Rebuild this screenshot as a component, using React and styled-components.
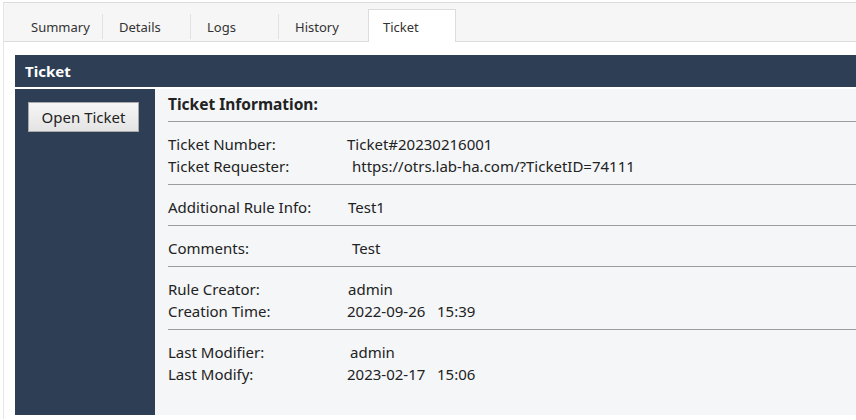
import React from "react";
import styled, { createGlobalStyle } from "styled-components";

const Global = createGlobalStyle`
  html, body { margin: 0; padding: 0; background: #ffffff; }
  body { font-family: "Noto Sans", "Open Sans", sans-serif; color: #222; }
`;

const Frame = styled.div`
  margin: 2px 0 0 3px;
  border-top: 1px solid #dcdcdc;
  border-left: 1px solid #e6e6e6;
  height: 417px;
  box-sizing: border-box;
`;

const TabBar = styled.div`
  display: flex;
  align-items: flex-end;
  height: 38px;
  padding-left: 12px;
  background: #f6f6f6;
  border-bottom: 1px solid #dcdcdc;
`;

const Tab = styled.div`
  box-sizing: border-box;
  width: 88px;
  height: 33px;
  margin-bottom: -1px;
  padding: 2px 0 0 14px;
  display: flex;
  align-items: center;
  font-size: 13px;
  color: #333;
  background: ${(p) => (p.$active ? "#ffffff" : "transparent")};
  border: 1px solid ${(p) => (p.$active ? "#dcdcdc" : "transparent")};
  border-bottom: none;
  position: relative;
  ${(p) =>
    p.$sep &&
    `&::after {
      content: "";
      position: absolute;
      right: 0;
      top: 4px;
      bottom: 3px;
      width: 1px;
      background: #e2e2e2;
    }`}
`;

const Panel = styled.div`
  margin: 13px 0 0 11px;
  display: flex;
  flex-direction: column;
`;

const Header = styled.div`
  height: 32px;
  background: #2e3f55;
  color: #ffffff;
  font-weight: 700;
  font-size: 15px;
  display: flex;
  align-items: center;
  padding-left: 10px;
  margin-bottom: 2px;
`;

const Body = styled.div`
  display: flex;
  height: 326px;
`;

const Sidebar = styled.div`
  width: 140px;
  flex: none;
  background: #2e3f55;
  padding: 13px 0 0 13px;
  box-sizing: border-box;
`;

const Button = styled.button`
  width: 111px;
  height: 30px;
  font-family: inherit;
  font-size: 15px;
  color: #222;
  background: linear-gradient(#f6f6f6, #e4e4e4);
  border: 1px solid #a9a9a9;
  border-radius: 0;
  padding: 0;
`;

const Content = styled.div`
  flex: 1;
  background: #f4f6f8;
  padding: 4px 0 0 13px;
  font-size: 15px;
  color: #222;
`;

const Title = styled.div`
  font-weight: 700;
  font-size: 15.5px;
  line-height: 22px;
  padding-bottom: 6px;
`;

const Divider = styled.div`
  border-top: 1px solid #9c9c9c;
`;

const Group = styled.div`
  padding: 11px 0 7px;
`;

const Row = styled.div`
  display: grid;
  grid-template-columns: 179px 1fr;
  line-height: 22px;
  white-space: pre;
`;

const Label = styled.span``;
const Value = styled.span`
  padding-left: ${(p) => p.$indent || 0}px;
`;

const groups = [
  [
    ["Ticket Number:", "Ticket#20230216001", 0],
    ["Ticket Requester:", "https://otrs.lab-ha.com/?TicketID=74111", 5],
  ],
  [["Additional Rule Info:", "Test1", 1]],
  [["Comments:", "Test", 5]],
  [
    ["Rule Creator:", "admin", 1],
    ["Creation Time:", "2022-09-26   15:39", 0],
  ],
  [
    ["Last Modifier:", "admin", 3],
    ["Last Modify:", "2023-02-17   15:06", 0],
  ],
];

const tabs = ["Summary", "Details", "Logs", "History", "Ticket"];

export default function App() {
  return (
    <>
      <Global />
      <Frame>
        <TabBar>
          {tabs.map((t, i) => (
            <Tab key={t} $active={t === "Ticket"} $sep={i < 3}>
              {t}
            </Tab>
          ))}
        </TabBar>
        <Panel>
          <Header>Ticket</Header>
          <Body>
            <Sidebar>
              <Button>Open Ticket</Button>
            </Sidebar>
            <Content>
              <Title>Ticket Information:</Title>
              {groups.map((g, gi) => (
                <React.Fragment key={gi}>
                  <Divider />
                  <Group>
                    {g.map(([l, v, ind]) => (
                      <Row key={l}>
                        <Label>{l}</Label>
                        <Value $indent={ind}>{v}</Value>
                      </Row>
                    ))}
                  </Group>
                </React.Fragment>
              ))}
            </Content>
          </Body>
        </Panel>
      </Frame>
    </>
  );
}
